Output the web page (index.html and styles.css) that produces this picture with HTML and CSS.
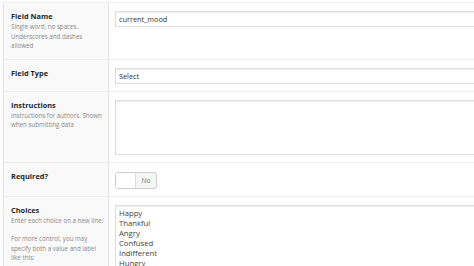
FILE: index.html
```html
<!DOCTYPE html>
<html lang="en">
<head>
  <meta charset="UTF-8">
  <title>Field settings</title>
  <meta name="viewport" content="width=device-width, initial-scale=1.0">
  <link rel="stylesheet" href="styles.css">
</head>
<body>
  <div class="fields">
    <div class="row">
      <div class="label">
        <label>Field Name</label>
        <p>Single word, no spaces. Underscores and dashes allowed</p>
      </div>
      <div class="input">
        <input type="text" class="text-input" value="current_mood">
      </div>
    </div>

    <div class="row">
      <div class="label">
        <label>Field Type</label>
      </div>
      <div class="input">
        <div class="select">Select</div>
      </div>
    </div>

    <div class="row">
      <div class="label">
        <label>Instructions</label>
        <p>Instructions for authors. Shown when submitting data</p>
      </div>
      <div class="input">
        <textarea class="instructions"></textarea>
      </div>
    </div>

    <div class="row">
      <div class="label">
        <label>Required?</label>
      </div>
      <div class="input">
        <div class="switch">
          <span class="slider"></span>
          <span class="switch-off">No</span>
        </div>
      </div>
    </div>

    <div class="row">
      <div class="label">
        <label>Choices</label>
        <p>Enter each choice on a new line.</p>
        <p class="gap">For more control, you may specify both a value and label like this:</p>
      </div>
      <div class="input">
        <div class="choices">Happy<br>Thankful<br>Angry<br>Confused<br>Indifferent<br>Hungry</div>
      </div>
    </div>
  </div>
</body>
</html>
```

FILE: styles.css
```css
* { box-sizing: border-box; }
body {
  margin: 0;
  background: #fff;
  font-family: "Open Sans", "Noto Sans", sans-serif;
  color: #333;
  overflow: hidden;
}
.fields {
  margin: 2px 0 0 3px;
  border-top: 1px solid #eee;
  border-left: 1px solid #e4e4e4;
}
.row {
  display: grid;
  grid-template-columns: 105px 1fr;
  border-bottom: 1px solid #eee;
}
.label {
  background: #f9f9f9;
  border-right: 1px solid #e4e4e4;
  padding: 8px 3px 8px 7px;
}
.label label {
  display: block;
  font-size: 7.4px;
  line-height: 10px;
  font-weight: bold;
  color: #23282d;
}
.label p {
  margin: 1px 0 0;
  font-size: 6.2px;
  line-height: 9.5px;
  color: #888;
}
.label p.gap {
  margin-top: 9px;
}
.input {
  padding: 8px 0 7px 6px;
  min-width: 0;
}
.text-input,
.select,
.instructions,
.choices {
  display: block;
  width: 400px;
  border: 1px solid #ddd;
  box-shadow: inset 0 1px 2px rgba(0,0,0,0.07);
  background: #fff;
  font-family: inherit;
  color: #333;
  margin: 0;
}
.text-input,
.select {
  height: 16px;
  padding: 0 3px;
  font-size: 7.3px;
  line-height: 14px;
  outline: none;
}
.instructions {
  height: 55px;
  resize: none;
}
.switch {
  display: flex;
  width: 42px;
  height: 17px;
  margin-top: 1px;
  border: 1px solid #ccc;
  border-radius: 3px;
  background: #f5f5f5;
  overflow: hidden;
}
.slider {
  width: 20px;
  background: #fff;
  border-right: 1px solid #ddd;
}
.switch-off {
  flex: 1;
  text-align: center;
  font-size: 6.5px;
  line-height: 15px;
  color: #777;
}
.choices {
  height: 80px;
  padding: 2px 3px;
  font-size: 7.7px;
  line-height: 10px;
  color: #444;
}
```
